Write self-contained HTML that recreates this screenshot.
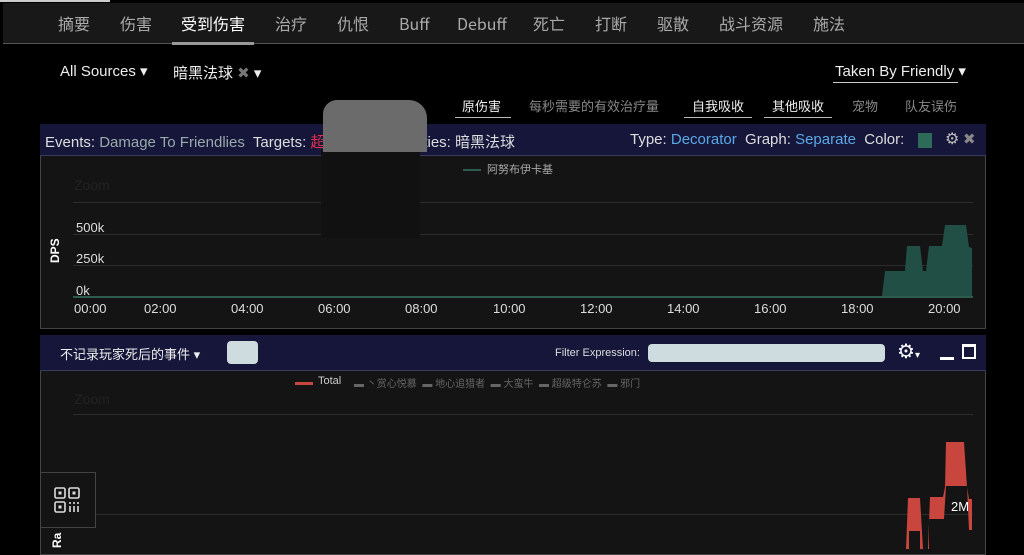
<!DOCTYPE html>
<html><head><meta charset="utf-8"><style>
*{margin:0;padding:0;box-sizing:border-box}
body{width:1024px;height:549px;background:#000;position:relative;overflow:hidden;font-family:"Liberation Sans","Noto Sans CJK SC",sans-serif;color:#ddd}
.a{position:absolute;white-space:nowrap}
.nav{left:3px;top:3px;width:1021px;height:41px;background:#181818;border-bottom:1px solid #555}
.nav span{position:absolute;top:0;height:40px;line-height:40px;font-size:16px;color:#aaa;font-family:"Noto Sans CJK SC",sans-serif}
.sub{font-size:13px;color:#888}
.hdr{background:#15163a;border-bottom:1px solid #3a3a5a}
.blue{color:#5aa9e6}
.grid{position:absolute;height:1px;background:#2c2c2c}
.tick{font-size:13px;color:#ddd}
</style></head><body>
<div class="a" style="left:0;top:0;width:110px;height:2px;background:#ccc"></div>
<div class="a nav">
<span style="left:55px">摘要</span><span style="left:117px">伤害</span>
<span style="left:178px;color:#fff">受到伤害</span><span style="left:272px">治疗</span>
<span style="left:334px">仇恨</span><span style="left:396px">Buff</span>
<span style="left:454px">Debuff</span><span style="left:530px">死亡</span>
<span style="left:592px">打断</span><span style="left:654px">驱散</span>
<span style="left:716px">战斗资源</span><span style="left:810px">施法</span>
<div class="a" style="left:169px;top:39px;width:82px;height:3px;background:#999"></div>
</div>
<div class="a" style="left:60px;top:62px;font-size:15px;color:#eee">All Sources ▾</div>
<div class="a" style="left:173px;top:62px;font-size:15px;color:#eee">暗黑法球 <span style="color:#777">✖</span> ▾</div>
<div class="a" style="left:835px;top:62px;font-size:15px;color:#eee">Taken By Friendly ▾</div>
<div class="a" style="left:833px;top:82px;width:125px;height:1px;background:#ccc"></div>
<div class="a sub" style="left:462px;top:96px;color:#eee">原伤害</div>
<div class="a" style="left:455px;top:117px;width:56px;height:1px;background:#bbb"></div>
<div class="a sub" style="left:529px;top:96px">每秒需要的有效治疗量</div>
<div class="a sub" style="left:692px;top:96px;color:#eee">自我吸收</div>
<div class="a" style="left:684px;top:117px;width:68px;height:1px;background:#bbb"></div>
<div class="a sub" style="left:772px;top:96px;color:#eee">其他吸收</div>
<div class="a" style="left:764px;top:117px;width:68px;height:1px;background:#bbb"></div>
<div class="a sub" style="left:852px;top:96px">宠物</div>
<div class="a sub" style="left:905px;top:96px">队友误伤</div>

<!-- chart 1 -->
<div class="a" style="left:40px;top:124px;width:946px;height:205px;background:#141414;border:1px solid #444"></div>
<div class="a hdr" style="left:40px;top:124px;width:946px;height:32px"></div>
<div class="a" style="left:45px;top:131px;font-size:15px;color:#ddd">Events: <span style="color:#9aa">Damage To Friendlies</span>&nbsp; Targets: <span style="color:#e0304a">超</span></div>
<div class="a" style="left:420px;top:131px;font-size:15px;color:#ddd">ities: 暗黑法球</div>
<div class="a" style="left:630px;top:131px;font-size:15px;color:#ddd">Type: <span class="blue">Decorator</span>&nbsp; Graph: <span class="blue">Separate</span>&nbsp; Color:</div>
<div class="a" style="left:918px;top:133px;width:14px;height:15px;background:#2e6a58"></div>
<div class="a" style="left:945px;top:129px;font-size:16px;color:#bbb">⚙</div>
<div class="a" style="left:963px;top:130px;font-size:15px;color:#888">✖</div>
<div class="a" style="left:463px;top:169px;width:18px;height:2px;background:#2d5b4d"></div>
<div class="a" style="left:487px;top:161px;font-size:11px;color:#aaa">阿努布伊卡基</div>
<div class="a" style="left:74px;top:177px;font-size:14px;color:#222">Zoom</div>
<div class="grid" style="left:73px;top:202px;width:900px"></div>
<div class="grid" style="left:73px;top:234px;width:900px"></div>
<div class="grid" style="left:73px;top:265px;width:900px"></div>
<div class="a tick" style="left:76px;top:220px">500k</div>
<div class="a tick" style="left:76px;top:251px">250k</div>
<div class="a tick" style="left:76px;top:283px">0k</div>
<div class="a" style="left:48px;top:263px;font-size:12px;font-weight:bold;color:#fff;transform:rotate(-90deg);transform-origin:left top">DPS</div>
<div class="a tick" style="left:74px;top:301px">00:00</div>
<div class="a tick" style="left:144px;top:301px">02:00</div>
<div class="a tick" style="left:231px;top:301px">04:00</div>
<div class="a tick" style="left:318px;top:301px">06:00</div>
<div class="a tick" style="left:405px;top:301px">08:00</div>
<div class="a tick" style="left:493px;top:301px">10:00</div>
<div class="a tick" style="left:580px;top:301px">12:00</div>
<div class="a tick" style="left:667px;top:301px">14:00</div>
<div class="a tick" style="left:754px;top:301px">16:00</div>
<div class="a tick" style="left:841px;top:301px">18:00</div>
<div class="a tick" style="left:928px;top:301px">20:00</div>
<!-- mask -->
<div class="a" style="left:321px;top:150px;width:99px;height:88px;background:#111"></div>
<div class="a" style="left:323px;top:100px;width:104px;height:52px;background:#6b6b6b;border-radius:14px 18px 0 0"></div>

<!-- chart 2 -->
<div class="a" style="left:40px;top:335px;width:946px;height:220px;background:#141414;border:1px solid #444"></div>
<div class="a hdr" style="left:40px;top:335px;width:946px;height:36px"></div>
<div class="a" style="left:60px;top:344px;font-size:13px;color:#eee">不记录玩家死后的事件 ▾</div>
<div class="a" style="left:227px;top:341px;width:31px;height:23px;background:#cfdcdf;border-radius:4px"></div>
<div class="a" style="left:555px;top:347px;font-size:11px;color:#ddd">Filter Expression:</div>
<div class="a" style="left:648px;top:344px;width:237px;height:18px;background:#cfdcdf;border-radius:4px"></div>
<div class="a" style="left:897px;top:339px;font-size:20px;color:#fff">⚙<span style="font-size:10px">▾</span></div>
<div class="a" style="left:940px;top:357px;width:14px;height:3px;background:#fff"></div>
<div class="a" style="left:962px;top:344px;width:14px;height:15px;border:2px solid #fff;border-top-width:3px"></div>
<div class="a" style="left:295px;top:382px;width:18px;height:3px;background:#c9463e"></div>
<div class="a" style="left:318px;top:375px;font-size:11px;color:#ccc">Total</div>
<div class="a" style="left:354px;top:375px;font-size:10px;color:#666">▬ 丶赏心悦慕 &nbsp;▬ 地心追猎者 &nbsp;▬ 大蛮牛 &nbsp;▬ 超级特仑苏 &nbsp;▬ 邪门</div>
<div class="a" style="left:74px;top:391px;font-size:14px;color:#222">Zoom</div>
<div class="grid" style="left:73px;top:414px;width:900px"></div>
<div class="grid" style="left:73px;top:514px;width:900px"></div>
<svg class="a" style="left:0;top:0" width="1024" height="549">
<rect x="73" y="296" width="900" height="2" fill="#2d5b4d"/>
<polygon points="882,296 885,271 905,271 907,246 920,246 923,271 926,271 929,246 942,246 945,225 966,225 969,247 972,248 972,296" fill="#224f45"/>
<polygon points="906,549 908,498 920,498 923,549 920,549 920,531 909,531 909,549" fill="#c9463e"/>
<polygon points="928,549 930,497 943,497 945,487 946,442 964,442 967,487 969,499 972,499 972,530 969,530 967,486 946,486 944,519 929,519 929,549" fill="#c9463e"/>
</svg>
<div class="a" style="left:951px;top:499px;font-size:13px;color:#fff">2M</div>
<div class="a" style="left:40px;top:472px;width:56px;height:56px;background:#141414;border:1px solid #444"></div>
<svg class="a" style="left:53px;top:486px" width="30" height="30" fill="none" stroke="#ddd" stroke-width="1.6">
<rect x="2" y="2" width="10" height="10" rx="1.5"/><rect x="5.5" y="5.5" width="3" height="3" fill="#ddd" stroke="none"/>
<rect x="16" y="2" width="10" height="10" rx="1.5"/><rect x="19.5" y="5.5" width="3" height="3" fill="#ddd" stroke="none"/>
<rect x="2" y="16" width="10" height="10" rx="1.5"/><rect x="5.5" y="19.5" width="3" height="3" fill="#ddd" stroke="none"/>
<path d="M17 20v6M21 16v2M21 20v6M25 20v6M17 16v2M25 16v2"/></svg>
<div class="a" style="left:50px;top:548px;font-size:12px;font-weight:bold;color:#fff;transform:rotate(-90deg);transform-origin:left top">Ra</div>
</body></html>
